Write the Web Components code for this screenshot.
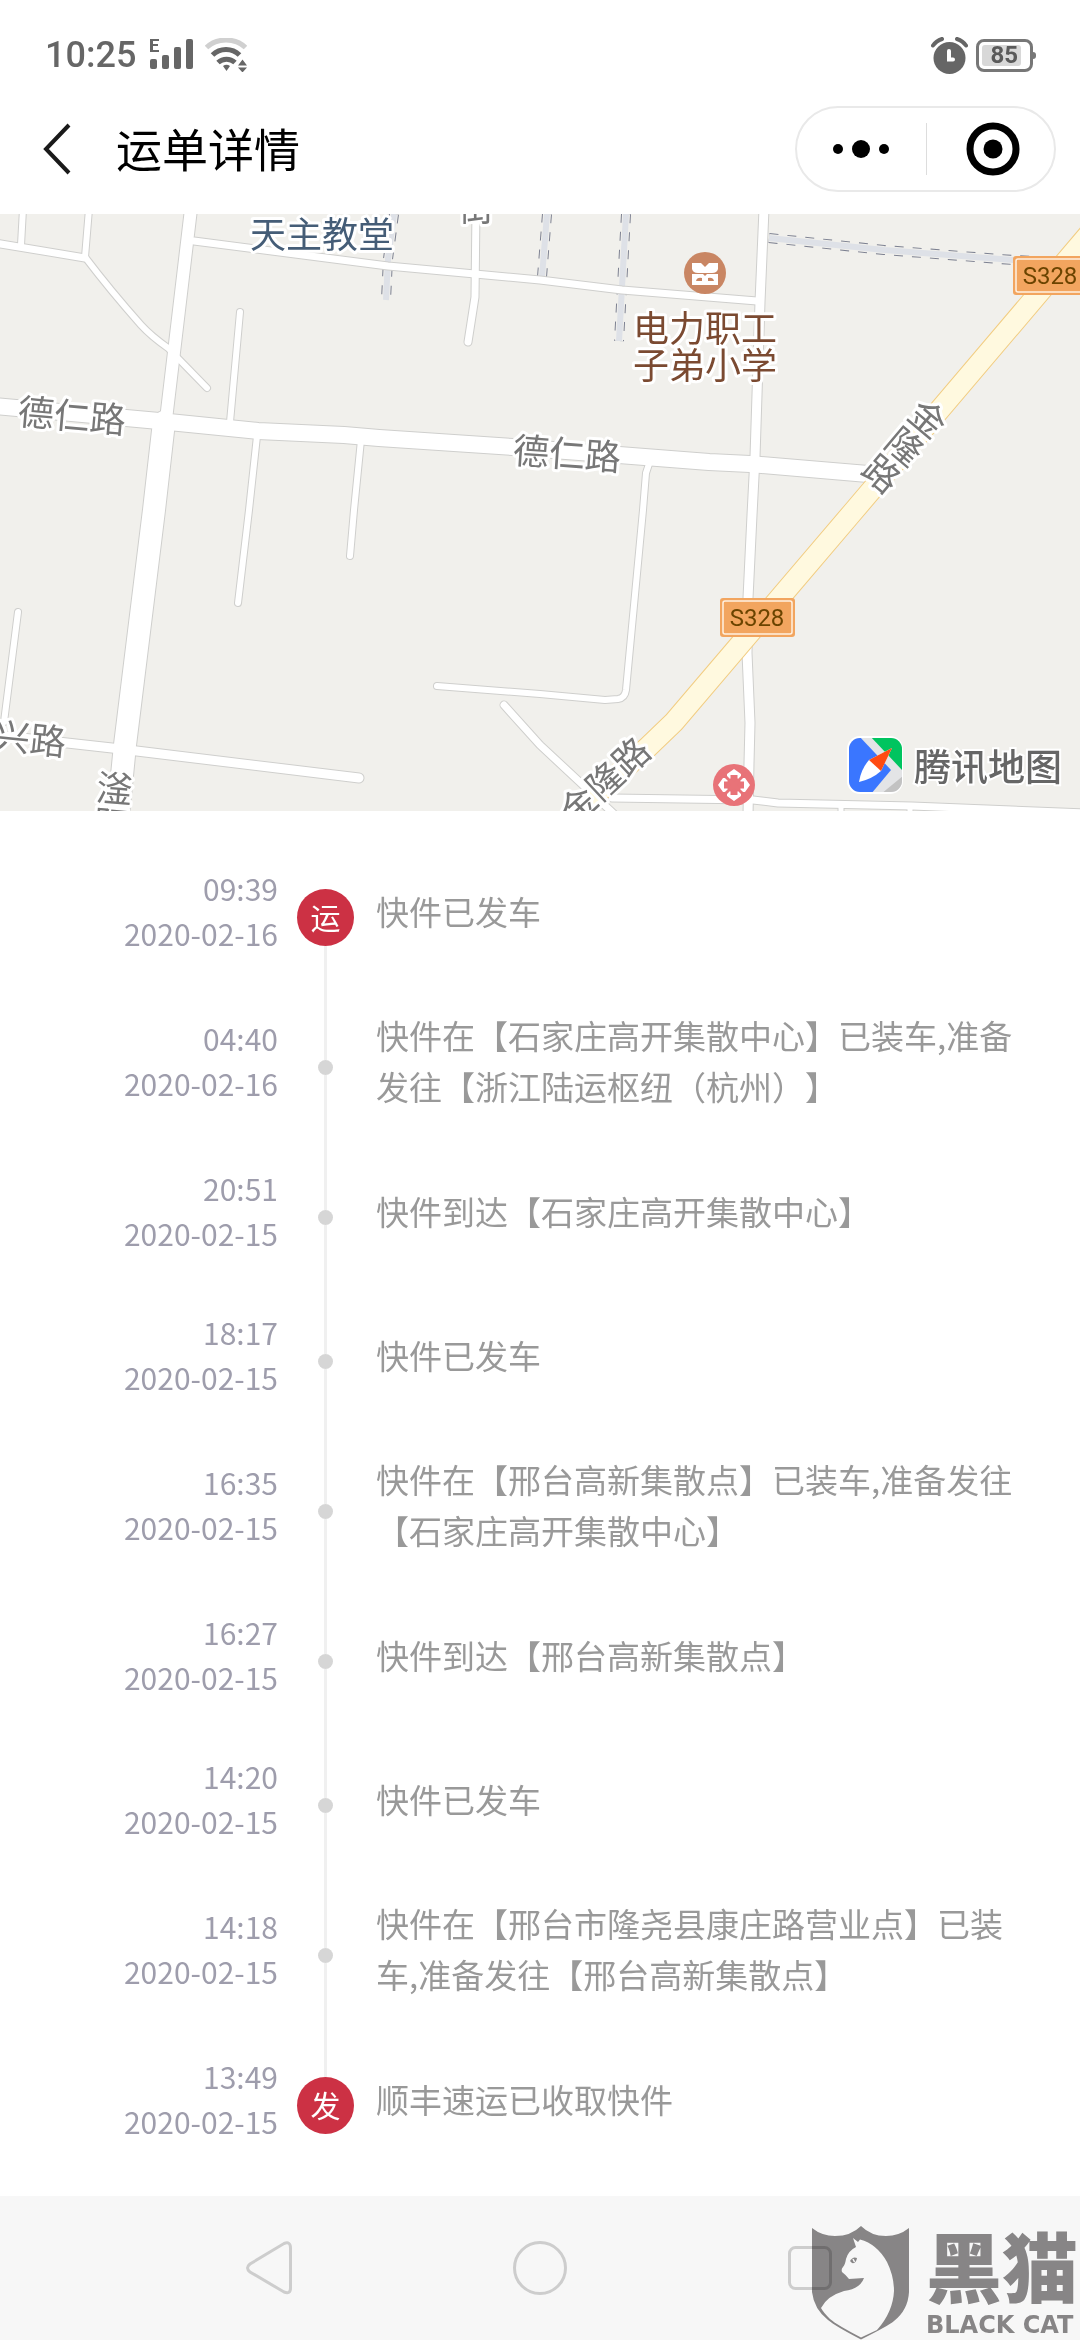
<!DOCTYPE html>
<html lang="zh-CN">
<head>
<meta charset="utf-8">
<meta name="viewport" content="width=device-width, initial-scale=1">
<title>运单详情</title>
<style>
  body {
    margin: 0;
    background: #fff;
    color: #999;
    font-family: "Noto Sans CJK SC", sans-serif;
    text-spacing-trim: space-all;
  }
</style>
</head>
<body>
<waybill-page>
  <status-bar slot="top" time="10:25" battery="85"></status-bar>
  <title-bar slot="top">运单详情</title-bar>
  <street-map slot="top"></street-map>

  <track-item badge="运" time="09:39" date="2020-02-16" first>快件已发车</track-item>
  <track-item time="04:40" date="2020-02-16">快件在【石家庄高开集散中心】已装车,准备发往【浙江陆运枢纽（杭州）】</track-item>
  <track-item time="20:51" date="2020-02-15">快件到达【石家庄高开集散中心】</track-item>
  <track-item time="18:17" date="2020-02-15">快件已发车</track-item>
  <track-item time="16:35" date="2020-02-15">快件在【邢台高新集散点】已装车,准备发往【石家庄高开集散中心】</track-item>
  <track-item time="16:27" date="2020-02-15">快件到达【邢台高新集散点】</track-item>
  <track-item time="14:20" date="2020-02-15">快件已发车</track-item>
  <track-item time="14:18" date="2020-02-15">快件在【邢台市隆尧县康庄路营业点】已装车,准备发往【邢台高新集散点】</track-item>
  <track-item badge="发" time="13:49" date="2020-02-15" last>顺丰速运已收取快件</track-item>

  <system-nav slot="bottom"></system-nav>
</waybill-page>

<script>
/**
 * Shared base: clones the template into an open shadow root
 */

class BaseElement extends HTMLElement {
  connectedCallback() {
    if (this.shadowRoot) return;
    let t = document.createElement("template");
    t.innerHTML = this.template;
    this.attachShadow({ mode: "open" });
    this.shadowRoot.appendChild(t.content.cloneNode(true));
  }
}

/**
 * Page frame: header parts, timeline, system keys
 */

class WaybillPage extends BaseElement {
  get template() {
    return `
    <style>
      :host {
        display: flex;
        flex-direction: column;
        min-height: 100vh;
      }

      main {
        flex: 1;
        padding: 34px 0 19px;
      }
    </style>
    <slot name="top"></slot>
    <main><slot></slot></main>
    <slot name="bottom"></slot>
    `;
  }
}

class StatusBar extends BaseElement {
  get template() {
    return `
    <style>
      :host {
        display: flex;
        align-items: center;
        justify-content: space-between;
        padding: 26px 44px 0 45px;
        height: 58px;
        color: #666;
        font-family: Roboto, sans-serif;
      }

      div {
        display: flex;
        align-items: center;
      }

      .time {
        font-size: 36px;
        font-weight: 500;
        line-height: 58px;
        margin-right: 14px;
      }

      .signal {
        margin-right: 12px;
      }

      .alarm {
        margin-right: 8px;
      }

      .battery {
        box-sizing: border-box;
        position: relative;
        width: 57px;
        height: 33px;
        border: 3px solid #777;
        border-radius: 8px;
        padding: 3px;
        margin-right: 3px;
      }

      .battery::after {
        content: "";
        position: absolute;
        right: -6px;
        top: 10px;
        width: 3px;
        height: 7px;
        border-radius: 0 3px 3px 0;
        background: #777;
      }

      .level {
        width: 39px;
        height: 21px;
        border-radius: 3px;
        background: #d8d8d8;
        font-size: 24px;
        font-weight: 700;
        line-height: 21px;
        color: #5a5a5a;
        justify-content: flex-end;
        padding-right: 3px;
        box-sizing: border-box;
      }
    </style>
    <div>
      <span class="time">${this.getAttribute("time")}</span>
      <svg class="signal" width="43" height="34" viewBox="0 0 43 34" fill="#666">
        <path d="M0 1h9v2H3v3h5v2H3v4h6v2H0z"/>
        <rect x="0" y="21" width="7" height="10" rx="2"/>
        <rect x="12" y="17" width="7" height="14" rx="2"/>
        <rect x="24" y="9" width="7" height="22" rx="2"/>
        <rect x="36" y="1" width="7" height="30" rx="2"/>
      </svg>
      <svg width="42" height="34" viewBox="0 0 42 34" fill="none" stroke="#666" stroke-width="5">
        <path d="M1.500 9.500C12-.5 30-.5 40.500 9.500" stroke="#d0d0d0"/>
        <path d="M7.500 17C15 9.500 27 9.500 34.500 17"/>
        <path d="M13 24.500c5-4.500 12-4.500 17 0"/>
        <path d="M18 28q3.500-2.500 7 0l-3.500 5z" fill="#666" stroke="none"/>
        <path d="M33 27.500l4.500-6 4.500 6zM33 29.500h9l-4.500 5z" fill="#666" stroke="none"/>
      </svg>
    </div>
    <div>
      <svg class="alarm" width="37" height="37" viewBox="0 0 37 37">
        <circle cx="18.500" cy="21" r="16" fill="#666"/>
        <path d="M2 8.500Q5 4 11 2M35 8.500Q32 4 26 2" fill="none" stroke="#666" stroke-width="4" stroke-linecap="round"/>
        <path d="M18 14v8.500h4" fill="none" stroke="#fff" stroke-width="4" stroke-linecap="round"/>
      </svg>
      <div class="battery"><div class="level">${this.getAttribute("battery")}</div></div>
    </div>
    `;
  }
}

class TitleBar extends BaseElement {
  get template() {
    return `
    <style>
      :host {
        display: flex;
        align-items: center;
        height: 130px;
        padding: 0 24px 0 40px;
        color: #000;
      }

      button {
        box-sizing: border-box;
        border: 0;
        padding: 0;
        background: none;
        display: flex;
        align-items: center;
        justify-content: center;
      }

      .back {
        width: 34px;
        height: 60px;
        margin-right: 42px;
      }

      h1 {
        flex: 1;
        margin: 0;
        padding-bottom: 5px;
        font-size: 46px;
        font-weight: 400;
        line-height: 64px;
      }

      .capsule {
        box-sizing: border-box;
        display: grid;
        grid-template-columns: 1fr 1fr;
        align-items: center;
        width: 261px;
        height: 86px;
        border: 2px solid #e9e9e9;
        border-radius: 43px;
      }

      .capsule button {
        height: 52px;
      }

      .capsule button + button {
        border-left: 1px solid #ddd;
        padding-left: 5px;
      }
    </style>
    <button class="back" aria-label="返回">
      <svg width="32" height="54" viewBox="0 0 32 54"><path d="M28 3L5 27l23 24" fill="none" stroke="#1a1a1a" stroke-width="4"/></svg>
    </button>
    <h1><slot></slot></h1>
    <div class="capsule">
      <button aria-label="更多">
        <svg width="56" height="20" viewBox="0 0 56 20"><circle cx="5" cy="10" r="5"/><circle cx="28" cy="10" r="9"/><circle cx="51" cy="10" r="5"/></svg>
      </button>
      <button aria-label="关闭">
        <svg width="54" height="54" viewBox="0 0 54 54"><circle cx="27" cy="27" r="23" fill="none" stroke="#000" stroke-width="7"/><circle cx="27" cy="27" r="9.500"/></svg>
      </button>
    </div>
    `;
  }
}

/**
 * Street map. Roads are [width, path]; each is drawn as a casing and then a fill,
 * so that crossings stay open.
 */

const ROADS = [
  [6, "M23-5L21 31"],
  [7, "M-5 29L85 44"],
  [6, "M89-5L85 43Q110 76 141 111Q151 122 168 134L207 174"],
  [7, "M194 27L388 52L475 60L540 66L622 76L757 87"],
  [7, "M476-5L475 83L468 128"],
  [6, "M240 98L230 208"],
  [6, "M257 222L249 296L238 389"],
  [6, "M361 226L354 296L350 342"],
  [6, "M649 250L646 259L643 296L626 476Q625 484 618 485L605 486L540 480L437 472"],
  [7, "M504 491L540 531L614 600"],
  [6, "M18 398L4 508"],
  [9, "M-5 521L112 534L359 564"],
  [7, "M612 584L753 586L778 589L912 592L1085 599"],
  [5, "M841 592V605"],
  [5, "M910 594V605"],
  [9, "M764-5L760 88L755 243L752 301L748 384L747 439L750 509L749 549L748 602"],
  [16, "M-5 192L159 207L258 217L344 221L379 224L513 233L619 241L709 248L750 250L868 260"],
  [12, "M191-5L165 214"],
  [22, "M164 208L154 296L125 531L118 602"]
];

const FOOTWAYS = [
  "M394 0L388 45L386 86",
  "M547 0L542 63",
  "M626 0L622 73L619 127",
  "M769 24L884 36L1013 46L1034 47"
];

const HIGHWAY = "M1089 20L852 299L674 508L647 534L560 613";

class StreetMap extends BaseElement {
  get roads() {
    let line = (d, w, c) => `<path d="${d}" stroke="${c}" stroke-width="${w}"/>`;
    return `
      ${FOOTWAYS.map(d => `
        <path d="${d}" stroke="#7d8191" stroke-width="10" stroke-dasharray="9 9" stroke-linecap="butt"/>
        <path d="${d}" stroke="#f1f0ec" stroke-width="8" stroke-linecap="butt"/>
        <path d="${d}" stroke="#dee1e7" stroke-width="6" stroke-linecap="butt"/>`).join("")}
      ${ROADS.map(([w, d]) => line(d, w + 2, "#cfcfcd")).join("")}
      ${ROADS.map(([w, d]) => line(d, w, "#fff")).join("")}
      ${line(HIGHWAY, 22, "#f2cd82")}
      ${line(HIGHWAY, 20, "#fff9df")}
    `;
  }

  shield(x, y) {
    return `
      <g transform="translate(${x} ${y})">
        <rect width="75" height="39" rx="3" fill="#f2a55f"/>
        <rect x="3" y="3" width="69" height="33" rx="2" fill="none" stroke="#fff1e2" stroke-width="1.500"/>
        <text class="code" x="37" y="28">S328</text>
      </g>`;
  }

  get template() {
    return `
    <style>
      :host {
        display: block;
        position: relative;
        height: 597px;
        overflow: hidden;
        background: #f1f0ec;
      }

      .canvas {
        display: block;
        width: 100%;
        height: 100%;
      }

      text {
        font-size: 36px;
        text-anchor: middle;
        fill: #777;
        stroke: #fff;
        stroke-width: 6px;
        stroke-linejoin: round;
        paint-order: stroke;
      }

      .column {
        writing-mode: vertical-rl;
      }

      .church {
        fill: #455d77;
      }

      .school {
        fill: #7b4a31;
      }

      .code {
        font-family: Roboto, sans-serif;
        font-size: 24px;
        fill: #6b4400;
        stroke: none;
      }

      .brand {
        position: absolute;
        right: 18px;
        bottom: 17px;
        display: flex;
        align-items: center;
        gap: 11px;
        color: #666;
        font-size: 37px;
        font-weight: 500;
        line-height: 56px;
        -webkit-text-stroke: 4px #fff;
        paint-order: stroke;
      }
    </style>
    <svg class="canvas" viewBox="0 0 1080 597" preserveAspectRatio="xMidYMid slice">
      <g fill="none" stroke-linecap="round" stroke-linejoin="round">${this.roads}</g>

      <text class="church" x="322" y="34">天主教堂</text>
      <text x="476" y="7">街</text>
      <text transform="translate(72 202) rotate(5)" y="13">德仁路</text>
      <text transform="translate(567 240) rotate(4)" y="13">德仁路</text>
      <text transform="translate(30 525) rotate(6)" y="13">兴路</text>
      <text transform="translate(605 567) rotate(-43)" y="13">金隆路</text>
      <text class="column" transform="translate(905 232) rotate(40)">金隆路</text>
      <text class="column" transform="translate(113 592) rotate(5)">滏阳</text>

      <g transform="translate(705 59)">
        <circle r="21" fill="#c98663"/>
        <path fill="#fff" d="M-13-10H-4L0-6L4-10H13V-4Q12 0 7 0H-7Q-12 0-13-4zM-13 1H-2L0 3L2 1H13V12H-13z"/>
        <path fill="#c98663" d="M-9 8Q-8 4-3 5V8zM9 8Q8 4 3 5V8z"/>
      </g>
      <text class="school" x="705" y="128">电力职工</text>
      <text class="school" x="705" y="165">子弟小学</text>

      <g transform="translate(734 571)">
        <circle r="21" fill="#e87378"/>
        <path d="M0-16L7-11V-7H11L16 0L11 7H7V11L0 16L-7 11V7H-11L-16 0L-11-7H-7V-11z" fill="#fff"/>
        <path d="M-12-12L12 12M12-12L-12 12" stroke="#e87378" stroke-width="3"/>
        <path d="M0-10V10M-10 0H10" stroke="#e87378" stroke-width="7"/>
        <path d="M-5-5L5 5M5-5L-5 5" stroke="#e87378" stroke-width="5"/>
      </g>

      ${this.shield(720, 384)}
      ${this.shield(1013, 42)}
    </svg>

    <div class="brand">
      <svg width="56" height="58" viewBox="0 0 56 58">
        <defs><clipPath id="tile"><rect x="2" y="2" width="53" height="54" rx="11"/></clipPath></defs>
        <rect width="56" height="58" rx="13" fill="#fff"/>
        <g clip-path="url(#tile)">
          <rect width="56" height="58" fill="#e3e4e6"/>
          <path d="M0 0H12L44 34L24 58H0z" fill="#3a76ff"/>
          <path d="M23 0H56V35z" fill="#00c45f"/>
          <path d="M56 40L34 58H56z" fill="#c2c2c2"/>
        </g>
        <path d="M45 12L22 24Q14 33 12 46Q25 43 34 35z" fill="#fff"/>
        <path d="M45 12L22 24L34 35z" fill="#ff4b12"/>
      </svg>
      <span>腾讯地图</span>
    </div>
    `;
  }
}

/**
 * One step of the waybill: time, marker on the rail, description
 */

class TrackItem extends BaseElement {
  get template() {
    let badge = this.getAttribute("badge");
    return `
    <style>
      :host {
        display: grid;
        grid-template-columns: 278px 95px 1fr;
        align-items: center;
      }

      time, p {
        margin: 0;
        padding: 21px 0 33px;
      }

      time {
        font-size: 30px;
        line-height: 45px;
        color: #9e9dac;
        text-align: right;
      }

      time span {
        display: block;
      }

      p {
        padding-left: 3px;
        padding-right: 56px;
        font-size: 33px;
        line-height: 51px;
      }

      .rail {
        align-self: stretch;
        display: flex;
        flex-direction: column;
        align-items: center;
      }

      .rail::before, .rail::after {
        content: "";
        flex: 1;
        width: 3px;
        background: #f0f0f0;
      }

      :host([first]) .rail::before, :host([last]) .rail::after {
        background: none;
      }

      .dot {
        width: 15px;
        height: 15px;
        border-radius: 50%;
        background: #d6d6d6;
      }

      .badge {
        width: 57px;
        height: 57px;
        border-radius: 50%;
        background: #cc3144;
        color: #fff;
        font-size: 30px;
        line-height: 54px;
        text-align: center;
      }
    </style>
    <time><span>${this.getAttribute("time")}</span><span>${this.getAttribute("date")}</span></time>
    <div class="rail"><div class="${badge ? "badge" : "dot"}">${badge || ""}</div></div>
    <p><slot></slot></p>
    `;
  }
}

class SystemNav extends BaseElement {
  get template() {
    return `
    <style>
      :host {
        position: relative;
        display: grid;
        grid-template-columns: repeat(3, 1fr);
        height: 144px;
        padding: 0 12.5%;
        background: #f7f7f7;
        overflow: hidden;
      }

      button {
        border: 0;
        padding: 0;
        background: none;
        display: flex;
        align-items: center;
        justify-content: center;
      }

      black-cat {
        position: absolute;
        right: 0;
        bottom: 0;
      }
    </style>
    <button aria-label="返回">
      <svg width="56" height="56" viewBox="0 0 56 56" fill="none" stroke="#cdcdcd" stroke-width="3"><path d="M42 3.500Q48.500 1 48.500 8V48Q48.500 54.500 42 52L8 32Q3 28 8 24z"/></svg>
    </button>
    <button aria-label="主页">
      <svg width="56" height="56" viewBox="0 0 56 56" fill="none" stroke="#cdcdcd" stroke-width="3"><circle cx="28" cy="28" r="25.500"/></svg>
    </button>
    <button aria-label="最近任务">
      <svg width="56" height="56" viewBox="0 0 56 56" fill="none" stroke="#cdcdcd" stroke-width="3"><rect x="7.500" y="7.500" width="41" height="41" rx="6"/></svg>
    </button>
    <black-cat></black-cat>
    `;
  }
}

/**
 * Black Cat mark that lies over the system keys
 */

class BlackCat extends BaseElement {
  get template() {
    return `
    <style>
      :host {
        display: flex;
        align-items: flex-end;
        gap: 16px;
        color: #8b898a;
        mix-blend-mode: multiply;
      }

      svg {
        display: block;
      }

      .name {
        display: flex;
        flex-direction: column;
        gap: 4px;
        width: 154px;
        white-space: nowrap;
      }

      .cn {
        font-size: 76px;
        font-weight: 900;
        line-height: 84px;
      }

      .en {
        font-family: "DejaVu Sans", sans-serif;
        font-size: 24px;
        font-weight: 700;
        line-height: 30px;
      }
    </style>
    <svg width="99" height="114" viewBox="0 0 99 114">
      <path d="M1 2Q11 10 24 10Q40 10 50 0Q60 10 75 10Q88 10 98 2V66Q97 84 83 95Q77 100 50 113.500Q24 100 17 94Q3 83 1 66z" fill="#8b898a"/>
      <path d="M42 12L47 16L49 13.500Q66 18 76 36Q83 50 83 65Q82 86 66 104L50 111.500Q26 99 19 93Q12 86 10 82Q16 70 33 65Q49 63 53 52L38 53Q35 49 31 46Q30 43 32 41Q34 39 35 33Q37 25 45 21Z" fill="#fff"/>
      <path d="M39 35Q42 30 46 32Q45 38 41 37z" fill="#8b898a"/>
      <path d="M42 33l1.500 3" stroke="#fff" stroke-width="1.500"/>
    </svg>
    <div class="name">
      <span class="cn">黑猫</span>
      <span class="en">BLACK CAT</span>
    </div>
    `;
  }
}

customElements.define("waybill-page", WaybillPage);
customElements.define("status-bar", StatusBar);
customElements.define("title-bar", TitleBar);
customElements.define("street-map", StreetMap);
customElements.define("track-item", TrackItem);
customElements.define("black-cat", BlackCat);
customElements.define("system-nav", SystemNav);
</script>
</body>
</html>
